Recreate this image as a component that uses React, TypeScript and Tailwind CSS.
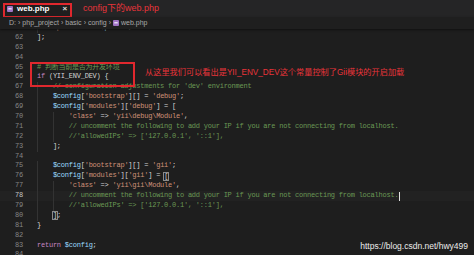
type Tok = [string, string]
type Line = { n: number; indent: number; toks: Tok[]; current?: boolean }

const P = '#d4d4d4'
const S = '#ce9178'
const V = '#9cdcfe'
const C = '#6a9955'
const K = '#c586c0'

const lines: Line[] = [
  { n: 61, indent: 1, toks: [["'params'", S], [' => ', P], ['$params', V], [',', P]] },
  { n: 62, indent: 0, toks: [['];', P]] },
  { n: 63, indent: 0, toks: [] },
  { n: 64, indent: 0, toks: [] },
  { n: 65, indent: 0, toks: [['# 判断当前是否为开发环境', C]] },
  { n: 66, indent: 0, toks: [['if', K], [' (YII_ENV_DEV) {', P]] },
  { n: 67, indent: 1, toks: [["// configuration adjustments for 'dev' environment", C]] },
  { n: 68, indent: 1, toks: [['$config', V], ['[', P], ["'bootstrap'", S], ['][] = ', P], ["'debug'", S], [';', P]] },
  { n: 69, indent: 1, toks: [['$config', V], ['[', P], ["'modules'", S], ['][', P], ["'debug'", S], ['] = [', P]] },
  { n: 70, indent: 2, toks: [["'class'", S], [' => ', P], ["'yii\\debug\\Module'", S], [',', P]] },
  { n: 71, indent: 2, toks: [['// uncomment the following to add your IP if you are not connecting from localhost.', C]] },
  { n: 72, indent: 2, toks: [["//'allowedIPs' => ['127.0.0.1', '::1'],", C]] },
  { n: 73, indent: 1, toks: [['];', P]] },
  { n: 74, indent: 0, toks: [] },
  { n: 75, indent: 1, toks: [['$config', V], ['[', P], ["'bootstrap'", S], ['][] = ', P], ["'gii'", S], [';', P]] },
  { n: 76, indent: 1, toks: [['$config', V], ['[', P], ["'modules'", S], ['][', P], ["'gii'", S], ['] = ', P], ['[', 'box']] },
  { n: 77, indent: 2, toks: [["'class'", S], [' => ', P], ["'yii\\gii\\Module'", S], [',', P]] },
  { n: 78, indent: 2, current: true, toks: [['// uncomment the following to add your IP if you are not connecting from localhost.', C], ['', 'cursor']] },
  { n: 79, indent: 2, toks: [["//'allowedIPs' => ['127.0.0.1', '::1'],", C]] },
  { n: 80, indent: 1, toks: [[']', 'box'], [';', P]] },
  { n: 81, indent: 0, toks: [['}', P]] },
  { n: 82, indent: 0, toks: [] },
  { n: 83, indent: 0, toks: [['return', K], [' ', P], ['$config', V], [';', P]] },
  { n: 84, indent: 0, toks: [] },
]

function PhpIcon() {
  return (
    <svg width="6" height="6" viewBox="0 0 6 6" className="shrink-0">
      <rect x="0" y="0" width="6" height="6" rx="1" fill="#a074c4" />
      <rect x="1.2" y="2" width="3.6" height="1.6" rx="0.4" fill="#e6d9f2" />
    </svg>
  )
}

function CodeLine({ line }: { line: Line }) {
  return (
    <div
      className={`flex h-[9.9px] items-center leading-[9.9px] ${line.current ? 'bg-[#222222]' : ''}`}
    >
      <span
        className={`w-[23px] shrink-0 text-right ${line.current ? 'text-[#c6c6c6]' : 'text-[#858585]'}`}
      >
        {line.n}
      </span>
      <span className="flex h-full items-center pl-[14px] whitespace-pre">
        {Array.from({ length: line.indent }).map((_, i) => (
          <span key={i} className="h-full w-[15.9px] shrink-0 border-l border-[#333333]" />
        ))}
        {line.toks.map(([t, c], i) =>
          c === 'cursor' ? (
            <span key={i} className="ml-[1px] h-[9px] w-[1px] bg-[#e0e0e0]" />
          ) : c === 'box' ? (
            <span key={i} className="leading-none text-[#d4d4d4] outline outline-[0.5px] outline-[#8a8a8a]">
              {t}
            </span>
          ) : (
            <span key={i} style={{ color: c }}>
              {t}
            </span>
          ),
        )}
      </span>
    </div>
  )
}

export default function App() {
  return (
    <div className="relative flex h-[255px] w-[474px] flex-col overflow-hidden bg-[#1e1e1e] font-['Liberation_Sans','Noto_Sans_CJK_SC',sans-serif]">
      {/* tab bar */}
      <div className="flex h-[17px] shrink-0 items-center bg-[#252526] leading-none">
        <div className="flex h-full w-[72px] items-center gap-[4px] bg-[#1e1e1e] pl-[7px]">
          <PhpIcon />
          <span className="text-[8px] font-bold text-white">web.php</span>
          <span className="ml-[9px] text-[8px] font-bold text-[#e0e0e0]">×</span>
        </div>
        <span className="ml-[11px] text-[9px] text-[#e8343a]">config下的web.php</span>
      </div>

      {/* breadcrumb */}
      <div className="z-10 flex h-[12px] shrink-0 items-center gap-[2px] bg-[#1f1f1f] pl-[9px] text-[7px] leading-[12px] text-[#a9a9a9] shadow-[0_1px_2px_#111]">
        <span>D:</span>
        <span>›</span>
        <span>php_project</span>
        <span>›</span>
        <span>basic</span>
        <span>›</span>
        <span>config</span>
        <span>›</span>
        <PhpIcon />
        <span>web.php</span>
      </div>

      {/* code */}
      <div className="flex-1 overflow-hidden">
        <div className="-mt-[6px] font-['Liberation_Mono','Noto_Sans_CJK_SC',monospace] text-[7px] tracking-[-0.23px]">
          {lines.map((l) => (
            <CodeLine key={l.n} line={l} />
          ))}
        </div>
      </div>

      {/* annotations */}
      <div className="absolute left-[3px] top-[3px] h-[15px] w-[69px] border-2 border-[#e0282e]" />
      <div className="absolute left-[30px] top-[62px] h-[25px] w-[105px] border-2 border-[#e0282e]" />
      <span className="absolute left-[145px] top-[69px] text-[8.2px] leading-none text-[#e8343a]">
        从这里我们可以看出是YII_ENV_DEV这个常量控制了Gii模块的开启加载
      </span>
      <span className="absolute bottom-[5px] right-[6px] text-[8.5px] leading-none text-[#ececec]">
        https://blog.csdn.net/hwy499
      </span>
    </div>
  )
}
